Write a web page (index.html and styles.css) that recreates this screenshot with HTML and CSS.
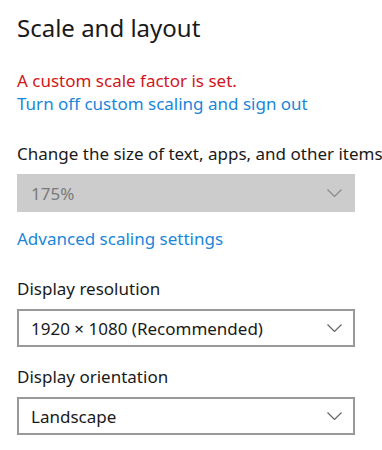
FILE: index.html
```html
<!DOCTYPE html>
<html lang="en">
  <head>
    <meta charset="UTF-8" />
    <meta name="viewport" content="width=device-width, initial-scale=1.0" />
    <title>Scale and layout</title>
    <link rel="stylesheet" href="styles.css">
  </head>
  <body>
    <section class="scale">
      <h1 class="scale__title">Scale and layout</h1>

      <div class="scale__notice">
        <p class="scale__warn">A custom scale factor is set.</p>
        <a class="scale__link" href="#">Turn off custom scaling and sign out</a>
      </div>

      <div class="scale__field">
        <p class="scale__label">Change the size of text, apps, and other items</p>
        <div class="select select--disabled">
          <span>175%</span>
          <svg class="select__chevron" width="15" height="8" viewBox="0 0 15 8">
            <polyline points="0.5,0.5 7.5,7.5 14.5,0.5" fill="none" stroke="currentColor" stroke-width="1.2" />
          </svg>
        </div>
      </div>

      <a class="scale__link scale__link--block" href="#">Advanced scaling settings</a>

      <div class="scale__field">
        <p class="scale__label">Display resolution</p>
        <div class="select">
          <span>1920 × 1080 (Recommended)</span>
          <svg class="select__chevron" width="15" height="8" viewBox="0 0 15 8">
            <polyline points="0.5,0.5 7.5,7.5 14.5,0.5" fill="none" stroke="currentColor" stroke-width="1.2" />
          </svg>
        </div>
      </div>

      <div class="scale__field scale__field--tight">
        <p class="scale__label">Display orientation</p>
        <div class="select">
          <span>Landscape</span>
          <svg class="select__chevron" width="15" height="8" viewBox="0 0 15 8">
            <polyline points="0.5,0.5 7.5,7.5 14.5,0.5" fill="none" stroke="currentColor" stroke-width="1.2" />
          </svg>
        </div>
      </div>
    </section>
  </body>
</html>
```

FILE: styles.css
```css
* {
  margin: 0;
  padding: 0;
  box-sizing: border-box;
}
html {
  font-family: "Noto Sans", "Open Sans", sans-serif;
  background-color: #fff;
  color: #1a1a1a;
}
.scale {
  display: flex;
  flex-direction: column;
  padding: 12px 0 0 17px;
  width: 382px;
}
.scale__title {
  font-size: 24px;
  font-weight: 400;
  line-height: 32px;
  color: #1a1a1a;
}
.scale__notice {
  display: flex;
  flex-direction: column;
  margin-top: 25px;
}
.scale__warn {
  font-size: 17px;
  line-height: 23px;
  color: #d1161b;
}
.scale__link {
  font-size: 17px;
  line-height: 23px;
  color: #1a86d9;
  text-decoration: none;
}
.scale__link--block {
  margin-top: 15px;
}
.scale__field {
  display: flex;
  flex-direction: column;
  gap: 9px;
  margin-top: 27px;
}
.scale__field--tight {
  margin-top: 18px;
}
.scale__label {
  font-size: 17px;
  line-height: 23px;
  white-space: nowrap;
}
.select {
  display: flex;
  align-items: center;
  justify-content: space-between;
  width: 338px;
  height: 38px;
  padding: 0 11px 0 12px;
  border: 2px solid #999;
  font-size: 17px;
  color: #1a1a1a;
}
.select__chevron {
  color: #666;
}
.select--disabled {
  border-color: #ccc;
  background-color: #ccc;
  color: #7a7a7a;
}
.select--disabled .select__chevron {
  color: #8a8a8a;
}
```
